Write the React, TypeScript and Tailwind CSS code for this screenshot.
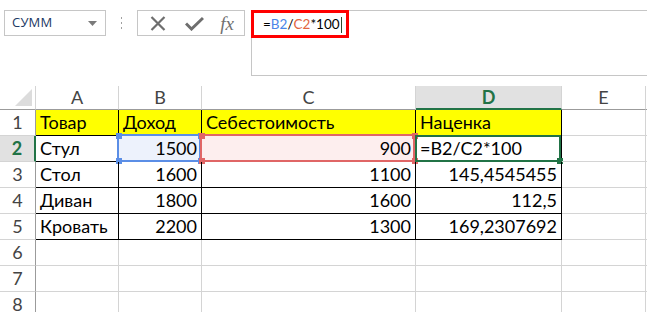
import React from "react";

const FONT = { fontFamily: "Lato, 'Liberation Sans', sans-serif" } as const;

type CellProps = {
  children?: React.ReactNode;
  className?: string;
};

function Cell({ children, className = "" }: CellProps) {
  return (
    <div
      className={
        "relative flex items-center whitespace-nowrap px-[4px] text-[18px] leading-[25px] text-black " +
        className
      }
    >
      {children}
    </div>
  );
}

function Squares({ color }: { color: string }) {
  return (
    <>
      <span className={"absolute left-[-3px] top-[-3px] h-[6px] w-[6px] " + color} />
      <span className={"absolute right-[-3px] top-[-3px] h-[6px] w-[6px] " + color} />
      <span className={"absolute left-[-3px] bottom-[-3px] h-[6px] w-[6px] " + color} />
      <span className={"absolute right-[-3px] bottom-[-3px] h-[6px] w-[6px] " + color} />
    </>
  );
}

const TB = "border-r border-b border-r-black border-b-black";
const GR = "border-r border-b border-r-[#d4d4d4] border-b-[#d4d4d4]";
const RH =
  "flex items-center justify-center border-r border-b border-r-[#9b9b9b] border-b-[#d4d4d4] text-[18px] leading-[25px] text-[#444]";
const CH =
  "flex items-center justify-center border-r border-b border-r-[#d4d4d4] border-b-[#9b9b9b] text-[18px] leading-[23px] text-[#444]";

export default function App() {
  return (
    <div className="h-[312px] w-[647px] overflow-hidden bg-white" style={FONT}>
      {/* Formula bar area */}
      <div className="flex h-[86px] items-start pt-[10px]">
        <div className="ml-[4px] flex h-[26px] w-[102px] items-center justify-between border border-[#c6c6c6] pl-[7px] pr-[8px]">
          <span className="text-[13px] tracking-[0.2px] text-[#203864]" style={{ fontFamily: "'Open Sans', sans-serif" }}>
            СУММ
          </span>
          <svg width="9" height="5" viewBox="0 0 9 5">
            <path d="M0 0 H9 L4.5 5 Z" fill="#7a7a7a" />
          </svg>
        </div>
        <div className="flex h-[26px] w-[31px] flex-col items-center justify-center gap-[3px]">
          <span className="h-[2px] w-[1px] bg-[#a0a0a0]" />
          <span className="h-[2px] w-[1px] bg-[#a0a0a0]" />
          <span className="h-[2px] w-[1px] bg-[#a0a0a0]" />
        </div>
        <div className="flex h-[26px] w-[108px] items-center border border-[#c6c6c6]">
          <div className="flex w-[36px] justify-center pl-[3px]">
            <svg width="16" height="15" viewBox="0 0 16 15">
              <path d="M1.5 1 L14.5 14 M14.5 1 L1.5 14" stroke="#6e6e6e" strokeWidth="2.2" />
            </svg>
          </div>
          <div className="flex w-[36px] justify-center pl-[4px]">
            <svg width="19" height="15" viewBox="0 0 19 15">
              <path d="M1 7.5 L6.5 13 L18 2" stroke="#6e6e6e" strokeWidth="3" fill="none" />
            </svg>
          </div>
          <div className="flex w-[34px] justify-center">
            <span
              className="text-[19px] italic leading-none text-[#707070]"
              style={{ fontFamily: "'Liberation Serif', serif" }}
            >
              fx
            </span>
          </div>
        </div>
        <div className="relative ml-[6px] h-[66px] flex-1 border-y border-l border-[#c6c6c6]">
          <div className="absolute left-[-1px] top-[-1px] h-[28px] w-[98px] border-[3px] border-[#ff0000]" />
          <div className="absolute left-[11px] top-[5px] flex items-center text-[13.5px] leading-[17px] text-black">
            <span>=</span>
            <span className="text-[#4a86e8]">B2</span>
            <span>/</span>
            <span className="text-[#e2653f]">C2</span>
            <span>*100</span>
            <span className="ml-[1px] h-[16px] w-[1px] bg-[#2d4b2d]" />
          </div>
        </div>
      </div>

      {/* Grid */}
      <div className="grid grid-cols-[36px_83px_83px_214px_146px_84px_1fr] grid-rows-[24px_26px_26px_26px_26px_26px_26px_26px_26px]">
        {/* header row */}
        <div className="relative border-r border-b border-r-[#d4d4d4] border-b-[#9b9b9b]">
          <svg className="absolute bottom-[3px] right-[3px]" width="17" height="17" viewBox="0 0 17 17">
            <path d="M17 0 V17 H0 Z" fill="#dcdcdc" />
          </svg>
        </div>
        <div className={CH}>A</div>
        <div className={CH}>B</div>
        <div className={CH}>C</div>
        <div className="flex items-center justify-center border-r border-b-2 border-r-[#d4d4d4] border-b-[#217346] bg-[#e1e1e1] text-[18px] font-bold leading-[23px] text-[#217346]">
          D
        </div>
        <div className={CH}>E</div>
        <div className="border-b border-b-[#9b9b9b]" />

        {/* row 1 */}
        <div className={RH}>1</div>
        <Cell className={TB + " bg-[#ffff00]"}>Товар</Cell>
        <Cell className={TB + " bg-[#ffff00]"}>Доход</Cell>
        <Cell className={TB + " bg-[#ffff00]"}>Себестоимость</Cell>
        <Cell className={TB + " bg-[#ffff00]"}>Наценка</Cell>
        <Cell className={GR} />
        <Cell className="border-b border-b-[#d4d4d4]" />

        {/* row 2 */}
        <div className="flex items-center justify-center border-r-2 border-b border-r-[#217346] border-b-[#d4d4d4] bg-[#e1e1e1] text-[18px] font-bold leading-[25px] text-[#217346]">
          2
        </div>
        <Cell className={TB}>Стул</Cell>
        <Cell className={TB + " justify-end bg-[#edf2fc]"}>
          <div className="absolute bottom-[-1px] left-[-2px] right-[0px] top-[-2px] border-2 border-[#5b8ee6]" />
          <Squares color="bg-[#5b8ee6]" />
          <span className="relative">1500</span>
        </Cell>
        <Cell className={TB + " justify-end bg-[#fdeeee]"}>
          <div className="absolute bottom-[-1px] left-[-2px] right-[0px] top-[-2px] border-2 border-[#e06666]" />
          <Squares color="bg-[#e06666]" />
          <span className="relative">900</span>
        </Cell>
        <Cell className={TB}>
          <div className="absolute bottom-[-1px] left-[-1px] right-[0px] top-[-1px] border-2 border-[#217346]" />
          <span className="absolute bottom-[-3px] right-[-2px] h-[6px] w-[6px] bg-[#217346]" />
          <span className="relative">=B2/C2*100</span>
        </Cell>
        <Cell className={GR} />
        <Cell className="border-b border-b-[#d4d4d4]" />

        {/* row 3 */}
        <div className={RH}>3</div>
        <Cell className={TB}>Стол</Cell>
        <Cell className={TB + " justify-end"}>1600</Cell>
        <Cell className={TB + " justify-end"}>1100</Cell>
        <Cell className={TB + " justify-end"}>145,4545455</Cell>
        <Cell className={GR} />
        <Cell className="border-b border-b-[#d4d4d4]" />

        {/* row 4 */}
        <div className={RH}>4</div>
        <Cell className={TB}>Диван</Cell>
        <Cell className={TB + " justify-end"}>1800</Cell>
        <Cell className={TB + " justify-end"}>1600</Cell>
        <Cell className={TB + " justify-end"}>112,5</Cell>
        <Cell className={GR} />
        <Cell className="border-b border-b-[#d4d4d4]" />

        {/* row 5 */}
        <div className={RH}>5</div>
        <Cell className={TB}>Кровать</Cell>
        <Cell className={TB + " justify-end"}>2200</Cell>
        <Cell className={TB + " justify-end"}>1300</Cell>
        <Cell className={TB + " justify-end"}>169,2307692</Cell>
        <Cell className={GR} />
        <Cell className="border-b border-b-[#d4d4d4]" />

        {/* rows 6-8 */}
        <div className={RH}>6</div>
        <Cell className={GR} />
        <Cell className={GR} />
        <Cell className={GR} />
        <Cell className={GR} />
        <Cell className={GR} />
        <Cell className="border-b border-b-[#d4d4d4]" />

        <div className={RH}>7</div>
        <Cell className={GR} />
        <Cell className={GR} />
        <Cell className={GR} />
        <Cell className={GR} />
        <Cell className={GR} />
        <Cell className="border-b border-b-[#d4d4d4]" />

        <div className={RH}>8</div>
        <Cell className={GR} />
        <Cell className={GR} />
        <Cell className={GR} />
        <Cell className={GR} />
        <Cell className={GR} />
        <Cell className="border-b border-b-[#d4d4d4]" />
      </div>
    </div>
  );
}
